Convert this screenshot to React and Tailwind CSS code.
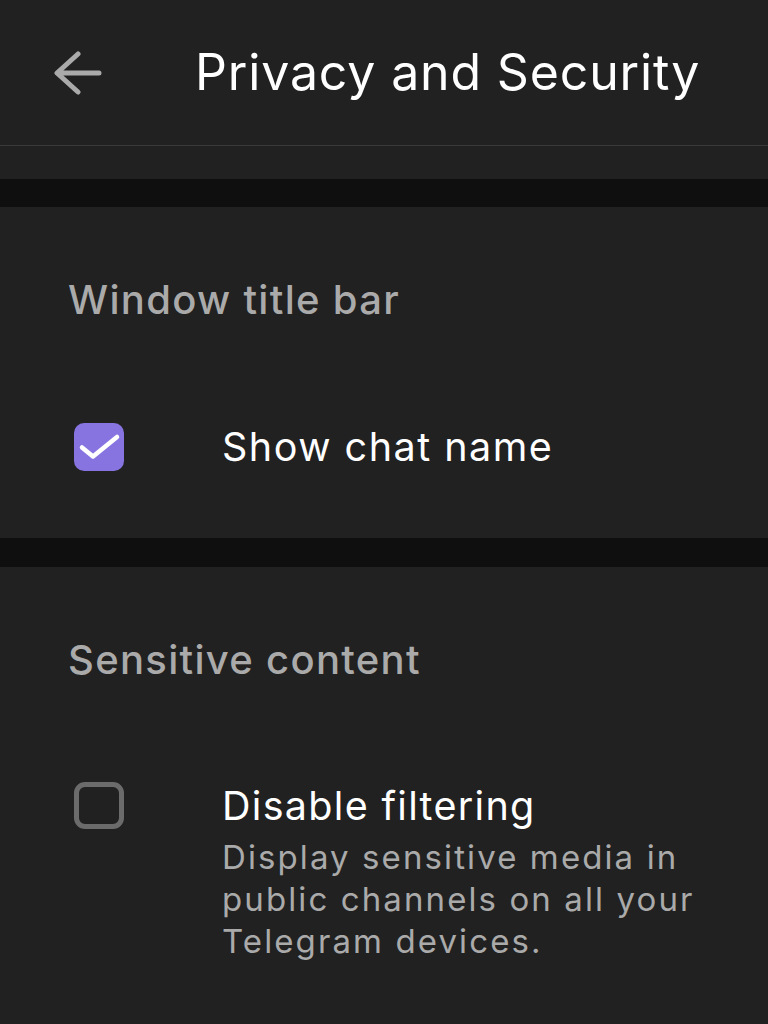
import React from "react";

const Check = ({ checked }) =>
  checked ? (
    <div className="w-[50px] h-[48px] rounded-[10px] bg-[#8774e1] shrink-0">
      <svg width="50" height="48" viewBox="0 0 50 48" fill="none">
        <path
          d="M8 24.5 L19 33.5 L43 14"
          stroke="white"
          strokeWidth="4.5"
          strokeLinecap="round"
          strokeLinejoin="round"
        />
      </svg>
    </div>
  ) : (
    <div className="w-[50px] h-[47px] rounded-[11px] border-[5px] border-[#6b6b6b] shrink-0" />
  );

export default function App() {
  return (
    <div
      className="min-h-[1024px] w-[768px] bg-[#212121] overflow-hidden"
      style={{ fontFamily: "Inter, Roboto, sans-serif" }}
    >
      {/* header */}
      <div className="h-[146px] flex items-center border-b border-[#3a3a3a]">
        <div className="w-[195px] pl-[53px] flex items-center">
          <svg width="50" height="44" viewBox="0 0 50 44" fill="none">
            <path
              d="M46 22 H5 M25 3 L4 22 L25 41"
              stroke="#aaaaaa"
              strokeWidth="5"
              strokeLinecap="round"
              strokeLinejoin="round"
            />
          </svg>
        </div>
        <h1 className="text-white text-[50px] leading-none font-normal tracking-[0.85px] pb-[2px]">
          Privacy and Security
        </h1>
      </div>
      <div className="h-[33px]" />
      <div className="h-[28px] bg-[#0f0f0f]" />

      {/* section 1 */}
      <div className="h-[331px] pt-[69px]">
        <div className="pl-[68px] text-[#aaaaaa] text-[40px] leading-[48px] font-medium tracking-[1.3px]">
          Window title bar
        </div>
        <div className="flex items-center pl-[74px] mt-[99px]">
          <Check checked />
          <div className="ml-[98px] text-white text-[39.5px] leading-[48px] tracking-[1.5px]">
            Show chat name
          </div>
        </div>
      </div>
      <div className="h-[29px] bg-[#0f0f0f]" />

      {/* section 2 */}
      <div className="pt-[69px]">
        <div className="pl-[68px] text-[#aaaaaa] text-[40px] leading-[48px] font-medium tracking-[1.3px]">
          Sensitive content
        </div>
        <div className="flex items-start pl-[74px] mt-[98px]">
          <Check checked={false} />
          <div className="ml-[98px]">
            <div className="text-white text-[39.5px] leading-[48px] tracking-[1.3px]">
              Disable filtering
            </div>
            <div className="text-[#aaaaaa] text-[33px] leading-[42px] w-[510px] tracking-[2.1px] mt-[6px]">
              Display sensitive media in public channels on all your Telegram
              devices.
            </div>
          </div>
        </div>
      </div>
    </div>
  );
}
